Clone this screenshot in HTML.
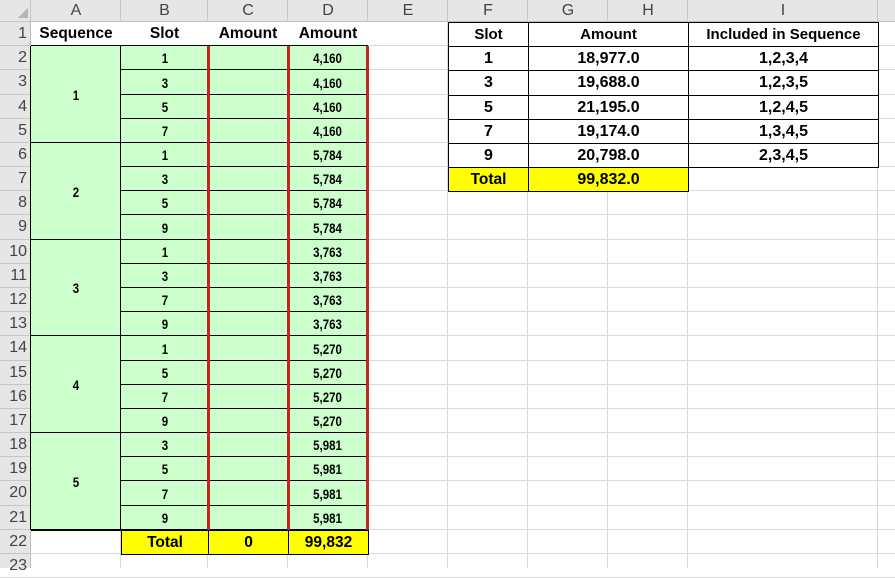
<!DOCTYPE html>
<html><head><meta charset="utf-8"><style>
body{margin:0;width:895px;height:568px;overflow:hidden;background:#fff;font-family:"Liberation Sans",Arial,sans-serif;position:relative}
div{position:absolute;box-sizing:border-box}
.t{display:flex;align-items:center;justify-content:center;font-weight:bold;color:#000}
.n{display:inline-block;transform:scaleX(.82)}
</style></head><body>
<div id="root" style="left:0;top:0;width:895px;height:568px"></div>
<script>
const R=document.getElementById('root');
function el(x,y,w,h,st,txt,cls){const d=document.createElement('div');d.style.cssText=`left:${x}px;top:${y}px;width:${w}px;height:${h}px;`+(st||'');if(cls)d.className=cls;if(txt!==undefined)d.textContent=txt;R.appendChild(d);return d;}
function nar(x,y,w,h,st,txt){const d=el(x,y,w,h,st,undefined,'t');const s=document.createElement('span');s.className='n';s.textContent=txt;d.appendChild(s);return d;}
const cx=[0,31,121,208,288,368,448,528,608,688,878,895];
const letters=['A','B','C','D','E','F','G','H','I',''];
function ry(i){return Math.round(22+(i-1)*24.18);}
for(let i=1;i<=24;i++){el(0,ry(i)-1,895,1,'background:#d9d9d9');}
for(let c=1;c<cx.length-1;c++){el(cx[c]-1,0,1,568,'background:#d9d9d9');}
el(0,0,895,22,'background:#e6e6e6;border-bottom:1px solid #bdbdbd');
el(18,8,10,10,'background:linear-gradient(135deg,transparent 50%,#b7b7b7 50%)');
for(let c=1;c<cx.length-1;c++){el(cx[c]-1,0,1,22,'background:#c6c6c6');el(cx[c],0,cx[c+1]-cx[c],22,'font-size:16px;color:#444;line-height:22px;text-align:center',letters[c-1]);}
el(0,22,31,546,'background:#e6e6e6;border-right:1px solid #bdbdbd');
for(let i=1;i<=23;i++){el(0,ry(i)-1,31,1,'background:#c6c6c6');el(0,ry(i),27,24,'font-size:16px;color:#444;line-height:24px;text-align:right',String(i));}
const H1=[[1,'Sequence'],[2,'Slot'],[3,'Amount'],[4,'Amount']];
H1.forEach(([c,t])=>el(cx[c],ry(1),cx[c+1]-cx[c],24,'font-size:15.5px;background:#fff',t,'t'));
el(cx[1],ry(2)-1,cx[5]-cx[1],1,'background:#000');
const groups=[[[1,3,5,7],4160],[[1,3,5,9],5784],[[1,3,7,9],3763],[[1,5,7,9],5270],[[3,5,7,9],5981]];
groups.forEach((g,gi)=>{
 const r0=2+gi*4, top=ry(r0), bot=ry(r0+4);
 nar(cx[1],top,cx[2]-cx[1],bot-top,'background:#ccffcc;font-size:14px',String(gi+1));
 g[0].forEach((s,k)=>{
  const r=r0+k, y=ry(r), h=ry(r+1)-y;
  el(cx[2],y,cx[5]-cx[2],h,'background:#ccffcc');
  nar(cx[2],y,cx[3]-cx[2],h,'font-size:14px',String(s));
  nar(cx[4],y,cx[5]-cx[4],h,'font-size:14px',g[1].toLocaleString('en-US'));
  if(k<3) el(cx[2],ry(r+1)-1,cx[5]-cx[2],1,'background:#000');
 });
 el(cx[1],bot-1,cx[5]-cx[1],2,'background:#000');
 el(cx[1]-1,top,1,bot-top,'background:#000');
 el(cx[2]-1,top,1,bot-top,'background:#000');
});
[207,287,366].forEach(x=>el(x,ry(2),3,ry(22)-ry(2),'background:#c0261a'));
const y22=ry(22),h22=ry(23)-y22;
[[2,'Total'],[3,'0'],[4,'99,832']].forEach(([c,t])=>el(cx[c],y22,cx[c+1]-cx[c]+1,h22+1,'background:#ffff00;border:1px solid #000;font-size:15.5px',t,'t'));
const rows=[['Slot','Amount','Included in Sequence'],['1','18,977.0','1,2,3,4'],['3','19,688.0','1,2,3,5'],['5','21,195.0','1,2,4,5'],['7','19,174.0','1,3,4,5'],['9','20,798.0','2,3,4,5']];
rows.forEach((r,i)=>{
 const y=ry(i+1),h=ry(i+2)-y;
 const fs=i==0?'15px':'16px';
 el(cx[6],y,cx[7]-cx[6]+1,h+1,'background:#fff;border:1px solid #000;font-size:'+fs,r[0],'t');
 el(cx[7],y,cx[9]-cx[7]+1,h+1,'background:#fff;border:1px solid #000;font-size:'+fs,r[1],'t');
 el(cx[9],y,cx[10]-cx[9]+1,h+1,'background:#fff;border:1px solid #000;font-size:'+fs,r[2],'t');
});
const y7=ry(7),h7=ry(8)-y7;
el(cx[6],y7,cx[7]-cx[6]+1,h7+1,'background:#ffff00;border:1px solid #000;font-size:15.5px','Total','t');
el(cx[7],y7,cx[9]-cx[7]+1,h7+1,'background:#ffff00;border:1px solid #000;font-size:16px','99,832.0','t');
</script>
</body></html>
